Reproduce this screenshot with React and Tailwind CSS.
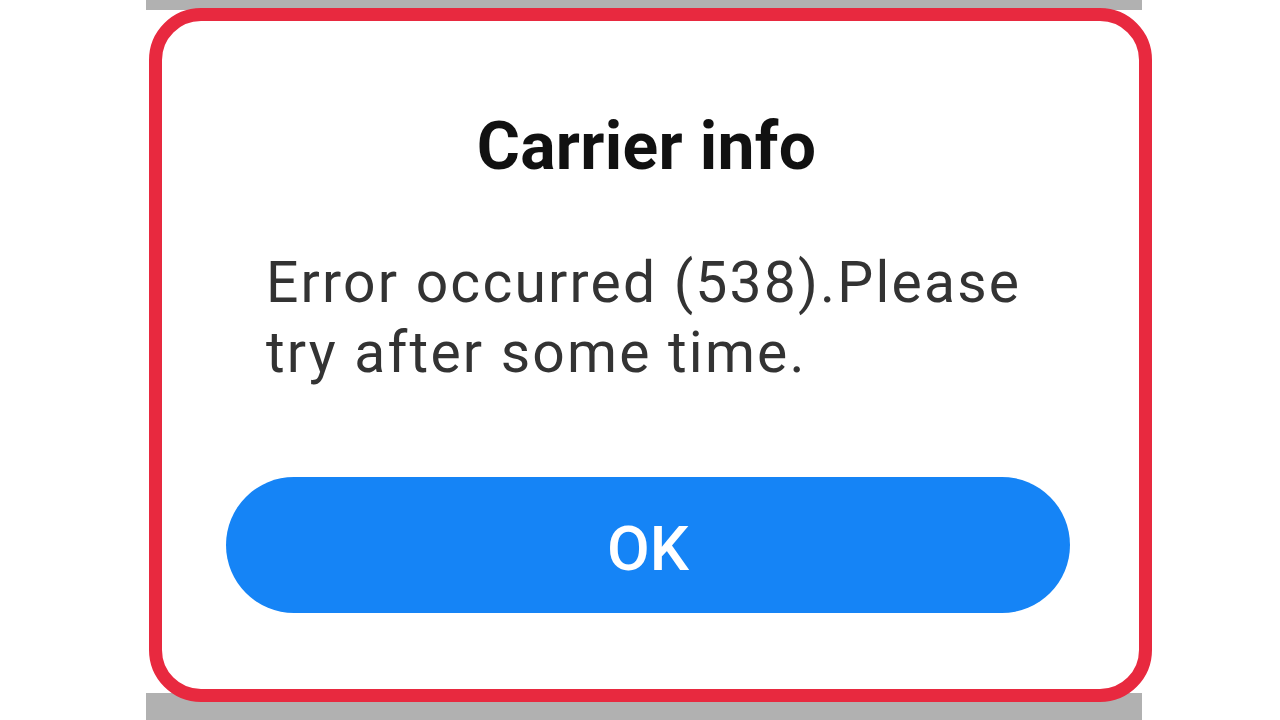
const font = { fontFamily: 'Roboto, "Noto Sans", "Liberation Sans", sans-serif' }

export default function App() {
  return (
    <div className="relative w-[1280px] h-[720px] bg-white overflow-hidden" style={font}>
      {/* phone screenshot backdrop */}
      <div className="ml-[146px] w-[996px] h-full flex flex-col">
        <div className="h-[10px] bg-[#b1b1b1]" />
        <div className="flex-1 bg-white" />
        <div className="h-[27px] bg-[#b1b1b1]" />
      </div>

      {/* dialog with red highlight frame */}
      <div className="absolute left-[149px] top-[8px] w-[1003px] h-[694px] rounded-[52px] border-[13px] border-[#e8293f] bg-white flex flex-col">
        <h1 className="pt-[93px] pr-[8px] text-center text-[66px] leading-[66px] font-bold text-[#111111] tracking-[0.3px]">
          Carrier info
        </h1>
        <p className="mt-[68px] pl-[104px] text-[57px] leading-[70px] text-[#333333] tracking-[2.2px]">
          Error occurred (538).Please
          <br />
          try after some time.
        </p>
        <button className="mt-[89px] ml-[64px] w-[844px] h-[136px] pt-[8px] rounded-full bg-[#1584f6] text-white text-[62px] font-medium leading-none">
          OK
        </button>
      </div>
    </div>
  )
}
